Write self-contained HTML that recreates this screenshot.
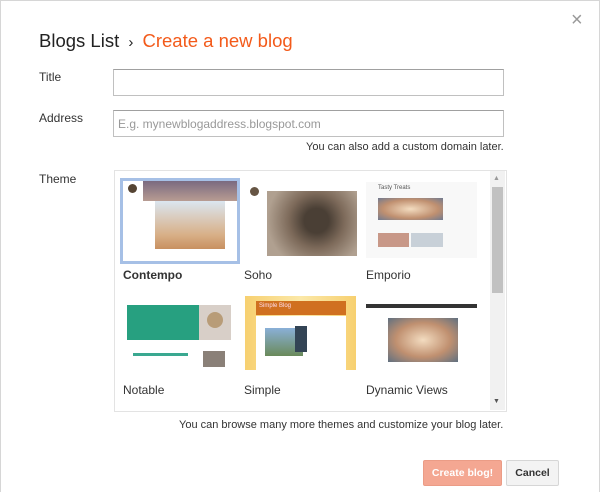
<!DOCTYPE html><html><head><style>
body{margin:0;width:600px;height:493px;overflow:hidden;background:#fff;font-family:"Liberation Sans",Arial,sans-serif;color:#222}
.frame{position:absolute;left:0;top:0;width:598px;height:491px;border:1px solid #d6d6d6;border-bottom:none}
.abs{position:absolute}
.lbl{font-size:12px;color:#333}
.inp{position:absolute;left:113px;width:389px;height:25px;border:1px solid #c0c0c0;border-top-color:#a0a0a0;background:#fff}
.th{position:absolute;overflow:hidden}
.tl{position:absolute;font-size:12px;color:#333}
</style></head><body>
<div class="frame"></div>
<div class="abs" style="left:571px;top:9px;font-size:20px;color:#999">×</div>
<div class="abs" style="left:39px;top:30px;font-size:18.5px;color:#222">Blogs List <span style="font-size:15px;margin:0 4px">›</span> <span style="color:#f35a1a">Create a new blog</span></div>
<div class="abs lbl" style="left:39px;top:70px">Title</div>
<div class="inp" style="top:69px"></div>
<div class="abs lbl" style="left:39px;top:111px">Address</div>
<div class="inp" style="top:110px"><span style="position:absolute;left:4px;top:6px;font-size:12px;color:#999">E.g. mynewblogaddress.blogspot.com</span></div>
<div class="abs" style="left:306px;top:141px;font-size:11px;color:#333">You can also add a custom domain later.</div>
<div class="abs lbl" style="left:39px;top:172px">Theme</div>
<div class="abs" style="left:114px;top:170px;width:391px;height:240px;border:1px solid #e3e3e3"></div>
<div class="abs" style="left:490px;top:171px;width:15px;height:239px;background:#f1f1f1"></div>
<div class="abs" style="left:492px;top:187px;width:11px;height:106px;background:#c1c1c1"></div>
<div class="abs" style="left:493px;top:175px;font-size:7px;color:#999">▲</div>
<div class="abs" style="left:493px;top:398px;font-size:7px;color:#555">▼</div>
<!-- row1 -->
<div class="th" style="left:120px;top:178px;width:114px;height:80px;border:3px solid #a6c0e6;background:#fff">
<div class="abs" style="left:20px;top:0;width:95px;height:20px;background:linear-gradient(#7a6a80,#b89c92)"></div>
<div class="abs" style="left:32px;top:20px;width:70px;height:48px;background:linear-gradient(#dbe6f0,#d8b088 70%,#c89060)"></div>
<div class="abs" style="left:5px;top:3px;width:9px;height:9px;border-radius:50%;background:#543"></div>
</div>
<div class="th" style="left:245px;top:183px;width:112px;height:73px;background:#fff">
<div class="abs" style="left:22px;top:8px;width:90px;height:66px;background:radial-gradient(circle at 55% 45%,#4a3f35 20%,#7d6a5a 45%,#b0a090 80%)"></div>
<div class="abs" style="left:5px;top:4px;width:9px;height:9px;border-radius:50%;background:#654"></div>
</div>
<div class="th" style="left:366px;top:182px;width:111px;height:76px;background:#f8f8f8">
<div class="abs" style="left:12px;top:3px;font-size:6px;color:#555">Tasty Treats</div>
<div class="abs" style="left:12px;top:16px;width:65px;height:22px;background:radial-gradient(#f3dcc0,#c09070 60%,#707a90)"></div>
<div class="abs" style="left:12px;top:51px;width:31px;height:14px;background:#c89888"></div>
<div class="abs" style="left:45px;top:51px;width:32px;height:14px;background:#c8d0d8"></div>
</div>
<div class="tl" style="left:123px;top:268px;font-weight:bold;color:#333">Contempo</div>
<div class="tl" style="left:244px;top:268px">Soho</div>
<div class="tl" style="left:366px;top:268px">Emporio</div>
<!-- row2 -->
<div class="th" style="left:125px;top:296px;width:108px;height:74px;background:#fff">
<div class="abs" style="left:2px;top:9px;width:72px;height:35px;background:#27a080"></div>
<div class="abs" style="left:74px;top:9px;width:32px;height:35px;background:#d8cfc8"></div>
<div class="abs" style="left:82px;top:16px;width:16px;height:16px;border-radius:50%;background:#b89c78"></div>
<div class="abs" style="left:8px;top:57px;width:55px;height:3px;background:#3aa890"></div>
<div class="abs" style="left:78px;top:55px;width:22px;height:16px;background:#8a8078"></div>
</div>
<div class="th" style="left:245px;top:296px;width:111px;height:74px;background:linear-gradient(90deg,#f7d070,#fbe8a8 50%,#f7d070)">
<div class="abs" style="left:11px;top:5px;width:90px;height:14px;background:#d07020"></div>
<div class="abs" style="left:14px;top:7px;font-size:6px;color:#fde">Simple Blog</div>
<div class="abs" style="left:11px;top:20px;width:90px;height:54px;background:#fff"></div>
<div class="abs" style="left:20px;top:32px;width:38px;height:28px;background:linear-gradient(#8ab0d8,#6a8a5a)"></div>
<div class="abs" style="left:50px;top:30px;width:12px;height:26px;background:#345"></div>
</div>
<div class="th" style="left:366px;top:296px;width:111px;height:74px;background:#fff">
<div class="abs" style="left:0;top:8px;width:111px;height:4px;background:#333"></div>
<div class="abs" style="left:22px;top:22px;width:70px;height:44px;background:radial-gradient(#f3dcc0,#c09070 55%,#607080)"></div>
</div>
<div class="tl" style="left:123px;top:383px">Notable</div>
<div class="tl" style="left:244px;top:383px">Simple</div>
<div class="tl" style="left:366px;top:383px">Dynamic Views</div>
<div class="abs" style="left:179px;top:419px;font-size:11px;color:#333">You can browse many more themes and customize your blog later.</div>
<div class="abs" style="left:423px;top:460px;width:79px;height:26px;background:#f4a792;border:1px solid #eb9c86;border-radius:2px;color:#fff;font-size:10.5px;font-weight:bold;text-align:center;line-height:24px;box-sizing:border-box">Create blog!</div>
<div class="abs" style="left:506px;top:460px;width:53px;height:26px;background:#f3f3f3;border:1px solid #d6d6d6;border-radius:2px;color:#333;font-size:10.5px;font-weight:bold;text-align:center;line-height:24px;box-sizing:border-box">Cancel</div>
</body></html>
